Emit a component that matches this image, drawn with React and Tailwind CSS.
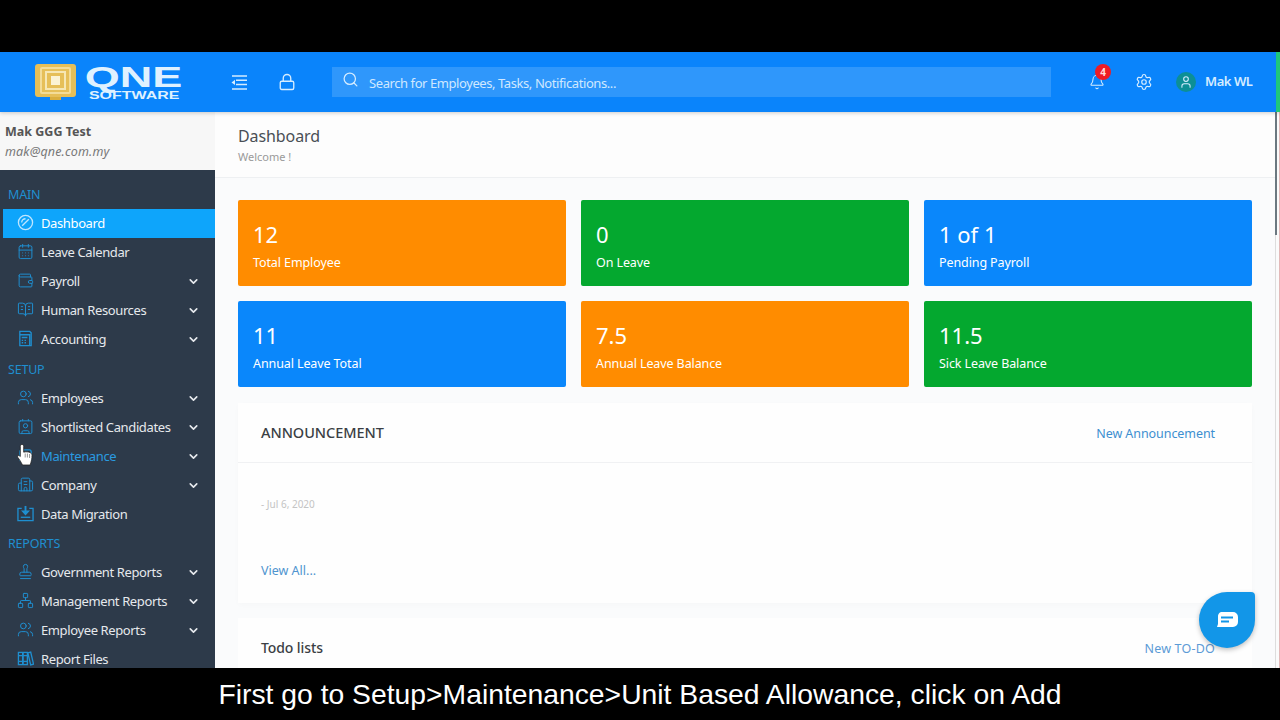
import React from 'react';
import {
  CalendarDays, Wallet, BookOpenText, Users, Contact, Building2,
  Stamp, Network, ChevronDown, Bell, Settings, User, Search, Lock,
} from 'lucide-react';

const DashIcon = (props) => (
  <svg viewBox="0 0 18 18" fill="none" stroke="currentColor" strokeWidth="1.2" {...props}>
    <circle cx="9" cy="9" r="7.5" />
    <path d="M5.500 12.500 12.500 5.500M5 9a4 4 0 0 1 4-4" />
  </svg>
);

const LedgerIcon = (props) => (
  <svg viewBox="0 0 18 18" fill="none" stroke="currentColor" strokeWidth="1.2" {...props}>
    <path d="M3 1.500h10.500L15 3v13.500H3z" />
    <path d="M3 5h10.500v11.500M5 8h6M5 11h1.500M8 11h1.500M5 13.500h1.500M8 13.500h1.500" strokeWidth="1.500" />
  </svg>
);

const TrayIcon = (props) => (
  <svg viewBox="0 0 18 18" fill="none" stroke="currentColor" strokeWidth="1.300" {...props}>
    <path d="M5 3.500H1v13h16v-13h-4" />
    <path d="M9 1v8" strokeWidth="2" />
    <path d="M5.800 6.500 9 10l3.200-3.500z" fill="currentColor" />
    <path d="M4 13h10" />
  </svg>
);

const FilesIcon = (props) => (
  <svg viewBox="0 0 18 18" fill="none" stroke="currentColor" strokeWidth="1.300" {...props}>
    <path d="M1.500 2.500h4.500v13H1.500zM6.500 2.500H11v13H6.500zM11.500 3l3-.8 3 12.800-3 .8z" />
    <path d="M1.500 6h4.500M6.500 6H11M1.500 12h4.500M6.500 12H11" />
  </svg>
);

const WrenchTile = (props) => (
  <svg viewBox="0 0 18 18" fill="none" stroke="currentColor" strokeWidth="1.2" {...props}>
    <rect x="3" y="3" width="12" height="12" rx="2" />
  </svg>
);

const mainItems = [
  { label: 'Dashboard', icon: DashIcon, active: true },
  { label: 'Leave Calendar', icon: CalendarDays },
  { label: 'Payroll', icon: Wallet, arrow: true },
  { label: 'Human Resources', icon: BookOpenText, arrow: true },
  { label: 'Accounting', icon: LedgerIcon, arrow: true },
];

const setupItems = [
  { label: 'Employees', icon: Users, arrow: true },
  { label: 'Shortlisted Candidates', icon: Contact, arrow: true },
  { label: 'Maintenance', icon: WrenchTile, arrow: true, hover: true },
  { label: 'Company', icon: Building2, arrow: true },
  { label: 'Data Migration', icon: TrayIcon },
];

const reportItems = [
  { label: 'Government Reports', icon: Stamp, arrow: true },
  { label: 'Management Reports', icon: Network, arrow: true },
  { label: 'Employee Reports', icon: Users, arrow: true },
  { label: 'Report Files', icon: FilesIcon },
];

const stats = [
  { value: '12', label: 'Total Employee', color: 'bg-[#ff8c00]' },
  { value: '0', label: 'On Leave', color: 'bg-[#04a82f]' },
  { value: '1 of 1', label: 'Pending Payroll', color: 'bg-[#0a87fb]' },
  { value: '11', label: 'Annual Leave Total', color: 'bg-[#0a87fb]' },
  { value: '7.5', label: 'Annual Leave Balance', color: 'bg-[#ff8c00]' },
  { value: '11.5', label: 'Sick Leave Balance', color: 'bg-[#04a82f]' },
];

const NavItem = ({ item }) => {
  const Icon = item.icon;
  return (
    <div className={`flex h-[29px] items-center ml-[3px] pl-[14px] pr-[15px] ${item.active ? 'bg-[#0ea5fb]' : ''}`}>
      <Icon width={17} height={17} strokeWidth={1.4} className={`-mt-[2px] ${item.active ? 'text-[#bfe6ff]' : 'text-[#1f8fd0]'}`} />
      <span className={`ml-[7px] flex-1 text-[13px] tracking-[-0.38px] ${item.active ? 'text-white' : item.hover ? 'text-[#2a9be0]' : 'text-[#e6e9ed]'}`}>
        {item.label}
      </span>
      {item.arrow && <ChevronDown size={13} strokeWidth={3} className="text-[#e6e9ed]" />}
    </div>
  );
};

const NavTitle = ({ children, tall }) => (
  <div className={`flex items-center pl-2 pt-[2px] text-[12.5px] tracking-[-0.2px] text-[#1f8fd0] ${tall ? 'h-[30px]' : 'h-[29px]'}`}>{children}</div>
);

const Logo = () => (
  <div className="flex w-[215px] items-center pl-[35px]">
    <svg width="41" height="38" viewBox="0 0 41 38">
      <path d="M15 33h11v4H15z" fill="#d9ae3e" />
      <rect x="0" y="1" width="41" height="33" rx="3" fill="#e6bf58" />
      <rect x="6" y="5" width="29" height="25" rx="1" fill="none" stroke="#f3dc98" strokeWidth="2" />
      <rect x="11" y="9" width="19" height="17" fill="none" stroke="#f6e7b4" strokeWidth="2" />
      <rect x="16" y="13" width="9" height="9" fill="#fbf3d4" />
    </svg>
    <div className="ml-[10px] flex w-[96px] flex-col items-center font-['Liberation_Sans',sans-serif] text-[#dff1ff]">
      <span className="h-[24px] text-[30px] leading-[24px] font-bold scale-x-[1.5]">QNE</span>
      <span className="mt-[1px] h-[10px] text-[11px] leading-[10px] font-bold scale-x-[1.45]">SOFTWARE</span>
    </div>
  </div>
);

const Header = () => (
  <header className="z-10 flex h-[60px] shrink-0 items-center bg-[#0a84fb] text-[#d5ecff] shadow-[0_1px_4px_rgba(0,0,0,0.2)]">
    <Logo />
    <svg width="16" height="15" viewBox="0 0 16 15" fill="none" stroke="currentColor" strokeWidth="1.5" className="ml-[16px]">
      <path d="M1 1h15M5 5.300h11M5 9.600h11M1 14h15" />
      <path d="M4 4.800 0.500 7.400 4 10z" fill="currentColor" stroke="none" />
    </svg>
    <Lock size={18} strokeWidth={1.8} className="ml-[31px]" />
    <div className="ml-[36px] flex h-[30px] w-[719px] items-center bg-[#2f97fb] pl-[10px]">
      <Search size={17} strokeWidth={1.8} className="-mt-[6px]" />
      <span className="ml-[10px] pt-[3px] text-[13px] tracking-[-0.42px] text-[#cfe8ff]">Search for Employees, Tasks, Notifications...</span>
    </div>
    <div className="relative ml-[38px]">
      <Bell size={16} strokeWidth={1.6} />
      <span className="absolute -top-[10px] left-[6px] flex h-[16px] w-[16px] items-center justify-center rounded-full bg-[#ee1c25] text-[10px] font-bold text-[#ffdcdc]">4</span>
    </div>
    <Settings size={18} strokeWidth={1.6} className="ml-[30px]" />
    <div className="ml-[23px] flex h-[20px] w-[20px] items-center justify-center rounded-full bg-[#0c8f95]">
      <User size={14} strokeWidth={1.8} />
    </div>
    <span className="ml-[9px] text-[13px] font-semibold tracking-[-0.45px]">Mak WL</span>
    <div className="ml-auto h-full w-[4px] bg-[#1fc77a]" />
  </header>
);

const Sidebar = () => (
  <aside className="flex w-[215px] shrink-0 flex-col overflow-hidden">
    <div className="h-[58px] shrink-0 bg-[#f7f7f7] pl-[5px] pt-[11px]">
      <div className="text-[12.5px] leading-[17px] font-bold text-[#555]">Mak GGG Test</div>
      <div className="mt-[4px] text-[12.5px] leading-[16px] italic tracking-[0.15px] text-[#777]">mak@qne.com.my</div>
    </div>
    <nav className="flex-1 bg-[#2d3a4a] pt-[10px]">
      <NavTitle>MAIN</NavTitle>
      {mainItems.map((item) => <NavItem key={item.label} item={item} />)}
      <NavTitle tall>SETUP</NavTitle>
      {setupItems.map((item) => <NavItem key={item.label} item={item} />)}
      <NavTitle>REPORTS</NavTitle>
      {reportItems.map((item) => <NavItem key={item.label} item={item} />)}
    </nav>
  </aside>
);

const StatCard = ({ stat }) => (
  <div className={`h-[86px] rounded-[2px] px-[15px] pt-[19px] text-white ${stat.color}`}>
    <div className="text-[22px] leading-[30px]">{stat.value}</div>
    <div className="mt-[5px] text-[12.5px] leading-[17px] tracking-[-0.1px]">{stat.label}</div>
  </div>
);

const Main = () => (
  <main className="flex-1 overflow-hidden bg-[#fafbfc]">
    <div className="h-[66px] border-b border-[#eef0f2] bg-[#fdfdfd] pl-[23px] pt-[13px]">
      <div className="text-[16px] leading-[22px] tracking-[-0.1px] text-[#4a4f55]">Dashboard</div>
      <div className="mt-[2px] text-[11px] leading-[15px] text-[#9a9a9a]">Welcome !</div>
    </div>
    <div className="pl-[23px] pr-[23px] pt-[22px]">
      <div className="grid grid-cols-3 gap-[15px]">
        {stats.map((stat) => <StatCard key={stat.label} stat={stat} />)}
      </div>
      <section className="mt-[16px] h-[200px] bg-[#fefefe] shadow-[0_2px_6px_rgba(0,0,0,0.02)]">
        <div className="flex h-[60px] items-center justify-between border-b border-[#f0f1f3] pl-[23px] pr-[37px]">
          <span className="text-[14.5px] font-medium tracking-[-0.05px] text-[#3b3f44]">ANNOUNCEMENT</span>
          <span className="pt-[3px] text-[12.5px] tracking-[-0.07px] text-[#3d8fd0]">New Announcement</span>
        </div>
        <div className="pl-[23px] pt-[34px] text-[10px] leading-[14px] text-[#c4c4c4]">- Jul 6, 2020</div>
        <div className="pl-[23px] pt-[51px] text-[12.5px] leading-[17px] text-[#4f94cf]">View All...</div>
      </section>
      <section className="mt-[15px] h-[60px] bg-[#fefefe]">
        <div className="flex h-[60px] items-center justify-between pl-[23px] pr-[37px]">
          <span className="-mt-[2px] text-[14px] font-medium tracking-[-0.1px] text-[#3b3f44]">Todo lists</span>
          <span className="pt-[2px] text-[12.5px] tracking-[0.2px] text-[#5c9bd6]">New TO-DO</span>
        </div>
      </section>
    </div>
  </main>
);

export default function App() {
  return (
    <div className="relative flex h-[720px] w-[1280px] flex-col overflow-hidden bg-black font-['Noto_Sans',sans-serif]">
      <div className="h-[52px] shrink-0 bg-black" />
      <Header />
      <div className="flex h-[556px] shrink-0">
        <Sidebar />
        <Main />
        <div className="w-[5px] shrink-0 border-l border-r border-l-[#ddd] border-r-[#e3b9b9] bg-[#fbfbfb]">
          <div className="-ml-px h-[123px] w-[2px] bg-[#6b7880]" />
        </div>
      </div>
      <div className="flex h-[52px] shrink-0 items-center justify-center font-['Liberation_Sans',sans-serif] text-[28.3px] text-white">
        First go to Setup&gt;Maintenance&gt;Unit Based Allowance, click on Add
      </div>

      {/* chat bubble */}
      <div className="absolute left-[1199px] top-[592px] flex h-[56px] w-[56px] items-center justify-center rounded-[50%_4px_50%_50%] bg-[#1296e8] shadow-[0_2px_5px_rgba(0,0,0,0.25)]">
        <svg width="24" height="18" viewBox="0 0 24 18">
          <path d="M6 1h12a5 5 0 0 1 5 5v5a5 5 0 0 1-5 5H2l1-3V6a5 5 0 0 1 3-5z" fill="#fff" />
          <path d="M6 6.500h12M6 10.500h8" stroke="#1296e8" strokeWidth="1.800" />
        </svg>
      </div>

      {/* mouse cursor */}
      <svg className="absolute left-[17px] top-[444px]" width="16" height="22" viewBox="0 0 16 22">
        <path d="M5 .5c1 0 1.700.8 1.700 1.800v5.900c1.500-.6 5-.5 6.500.4 1 .6 1.800 1.400 1.800 2.900 0 3-.5 5.500-1.800 9.500H5.500C4 18 2.500 15.500.9 13.500c-.9-1.200.2-2.500 1.500-1.700l.9.700V2.300C3.300 1.300 4 .5 5 .5z" fill="#fff" stroke="#222" strokeWidth="0.8" />
        <path d="M8.200 9.500v4M10.400 9.500v4M12.600 10v4" stroke="#777" strokeWidth="0.8" />
      </svg>
    </div>
  );
}
